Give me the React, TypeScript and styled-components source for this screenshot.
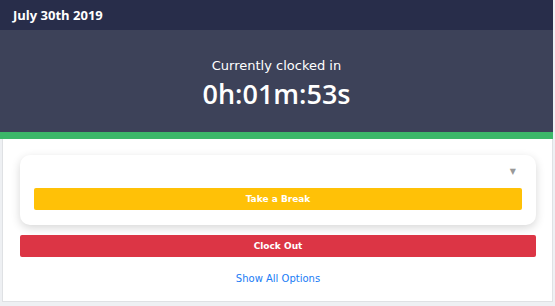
import React from "react";
import styled, { createGlobalStyle } from "styled-components";

const GlobalStyle = createGlobalStyle`
  html, body {
    margin: 0;
    padding: 0;
    background: #eef0f3;
  }
  * {
    box-sizing: border-box;
  }
`;

const font = `"DejaVu Sans", "Open Sans", sans-serif`;
const displayFont = `"Open Sans", "DejaVu Sans", sans-serif`;

function App() {
  return (
    <>
      <GlobalStyle />
      <Card>
        <Header>July 30th 2019</Header>
        <Hero>
          <Label>Currently clocked in</Label>
          <Timer>0h:01m:53s</Timer>
        </Hero>
        <Stripe />
        <Body>
          <BreakCard>
            <SelectRow>
              <Caret>▼</Caret>
            </SelectRow>
            <ActionButton $color="#ffc107">Take a Break</ActionButton>
          </BreakCard>
          <ClockOut $color="#dc3545">Clock Out</ClockOut>
          <OptionsLink href="#">Show All Options</OptionsLink>
        </Body>
      </Card>
    </>
  );
}

const Card = styled.div`
  width: 553px;
  display: flex;
  flex-direction: column;
  font-family: ${font};
`;

const Header = styled.div`
  height: 30px;
  display: flex;
  align-items: center;
  padding: 0 13px;
  background: #282d4a;
  color: #fff;
  font-family: ${displayFont};
  font-weight: 700;
  font-size: 13px;
`;

const Hero = styled.div`
  height: 102px;
  background: #3d4259;
  color: #fff;
  display: flex;
  flex-direction: column;
  align-items: center;
  justify-content: center;
  padding-top: 6px;
`;

const Label = styled.div`
  font-size: 13px;
  line-height: 16px;
`;

const Timer = styled.div`
  font-family: ${displayFont};
  font-size: 27px;
  line-height: 34px;
  font-weight: 600;
  margin-top: 3px;
`;

const Stripe = styled.div`
  height: 7px;
  background: #3cb769;
`;

const Body = styled.div`
  margin-left: 2px;
  background: #fff;
  border: 1px solid #dfe1e4;
  border-top: none;
  padding: 16px 16px 0 17px;
  height: 163px;
  display: flex;
  flex-direction: column;
`;

const BreakCard = styled.div`
  height: 70px;
  border-radius: 10px;
  background: #fff;
  box-shadow: 0 3px 10px rgba(0, 0, 0, 0.16);
  padding: 4px 14px 15px;
  display: flex;
  flex-direction: column;
`;

const SelectRow = styled.div`
  height: 25px;
  display: flex;
  justify-content: flex-end;
  align-items: center;
  padding-right: 6px;
`;

const Caret = styled.span`
  color: #999;
  font-size: 8px;
  font-family: "DejaVu Sans", sans-serif;
`;

const ActionButton = styled.button<{ $color: string }>`
  height: 22px;
  margin-top: auto;
  border: none;
  border-radius: 2px;
  background: ${(p) => p.$color};
  color: #fff;
  font-family: ${font};
  font-weight: 700;
  font-size: 9px;
  padding: 0;
  width: 100%;
`;

const ClockOut = styled(ActionButton)`
  margin-top: 10px;
`;

const OptionsLink = styled.a`
  margin-top: 16px;
  align-self: center;
  color: #1a7cf5;
  text-decoration: none;
  font-size: 10px;
`;

export default App;
